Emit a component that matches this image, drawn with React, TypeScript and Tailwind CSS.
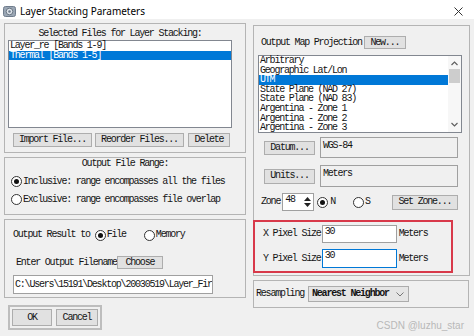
import React from "react";

const T = "font-['Liberation_Mono',monospace] text-[10px] leading-[10px] tracking-[-1.2px] text-[#141414] whitespace-pre";

function Btn({ children, className = "" }: { children: React.ReactNode; className?: string }) {
  return (
    <div className={`flex items-center justify-center bg-[#e1e1e1] border border-[#adadad] shrink-0 ${className}`}>
      {children}
    </div>
  );
}

function Radio({ checked }: { checked?: boolean }) {
  return (
    <div className="w-[11px] h-[11px] rounded-full border border-[#333] bg-white flex items-center justify-center shrink-0">
      {checked && <div className="w-[5px] h-[5px] rounded-full bg-[#111]" />}
    </div>
  );
}

const frame = "border border-[#b4b4b4]";

export default function App() {
  const projections = [
    "Arbitrary",
    "Geographic Lat/Lon",
    "UTM",
    "State Plane (NAD 27)",
    "State Plane (NAD 83)",
    "Argentina - Zone 1",
    "Argentina - Zone 2",
    "Argentina - Zone 3",
  ];
  return (
    <div className={`relative w-[474px] h-[336px] overflow-hidden bg-[#f0f0f0] ${T}`}>
      {/* Title bar */}
      <div className="h-[19px] bg-white flex items-center">
        <svg width="13" height="11" viewBox="0 0 13 11" className="ml-[3px] mt-[3px]">
          <rect x="0.5" y="0.5" width="12" height="10" rx="2" fill="#9aa6b4" stroke="#6f7c8c" />
          <circle cx="6.5" cy="5.5" r="3.3" fill="#dde3ea" stroke="#566270" strokeWidth="0.8" />
          <circle cx="6.5" cy="5.5" r="1.3" fill="#6f7c8c" />
        </svg>
        <span className="ml-[4px] mt-[2px] font-['Noto_Sans',sans-serif] text-[10px] tracking-normal text-black">
          Layer Stacking Parameters
        </span>
        <svg width="9" height="9" viewBox="0 0 9 9" className="ml-auto mr-[11px] mt-[3px]">
          <path d="M0.5 0.5 L8.5 8.5 M8.5 0.5 L0.5 8.5" stroke="#333" strokeWidth="1" />
        </svg>
      </div>

      <div className="flex">
        {/* Left column */}
        <div className="ml-[4px] mt-[4px] flex flex-col w-[242px]">
          {/* Panel 1 */}
          <div className={`h-[130px] ${frame} flex flex-col`}>
            <div className="ml-[3px] mt-[5px] w-[224px] text-center">Selected Files for Layer Stacking:</div>
            <div className="ml-[3px] mt-[1px] w-[224px] h-[88px] bg-white border border-[#828790] flex flex-col">
              <div className="h-[9.6px] leading-[9.6px] pl-[1px]">Layer_re [Bands 1-9]</div>
              <div className="h-[9.6px] leading-[9.6px] pl-[1px] bg-[#0078d7] text-white">Thermal [Bands 1-5]</div>
            </div>
            <div className="flex mt-[5px] ml-[8px]">
              <Btn className="w-[79px] h-[14px]">Import File...</Btn>
              <Btn className="w-[89px] h-[14px] ml-[3px]">Reorder Files...</Btn>
              <Btn className="w-[42px] h-[14px] ml-[4px]">Delete</Btn>
            </div>
          </div>

          {/* Panel 2 */}
          <div className={`mt-[4px] h-[58px] ${frame} flex flex-col`}>
            <div className="mt-[1px] text-center">Output File Range:</div>
            <div className="mt-[7px] ml-[6px] flex items-center h-[11px]">
              <Radio checked />
              <span className="ml-[1px]">Inclusive: range encompasses all the files</span>
            </div>
            <div className="mt-[7px] ml-[6px] flex items-center h-[11px]">
              <Radio />
              <span className="ml-[1px]">Exclusive: range encompasses file overlap</span>
            </div>
          </div>

          {/* Panel 3 */}
          <div className={`mt-[4px] h-[79px] ${frame} flex flex-col`}>
            <div className="mt-[9px] ml-[8px] flex items-center h-[12px]">
              <span>Output Result to </span>
              <Radio checked />
              <span className="ml-[1px]">File</span>
              <div className="ml-[18px]">
                <Radio />
              </div>
              <span className="ml-[1px]">Memory</span>
            </div>
            <div className="mt-[15px] ml-[11px] flex items-center h-[13px]">
              <span>Enter Output Filename</span>
              <Btn className="w-[46px] h-[13px] ml-[0px]">Choose</Btn>
            </div>
            <div className="mt-[6px] ml-[8px] w-[200px] h-[19px] bg-white border border-[#a0a0a0] flex items-center pl-[1px] overflow-hidden">
              <span>C:\Users\15191\Desktop\20030519\Layer_Fir</span>
            </div>
          </div>

          {/* OK / Cancel */}
          <div className="mt-[7px] ml-[4px] self-start border-2 border-[#bdbdbd] p-[2px] flex">
            <Btn className="w-[40px] h-[17px]">OK</Btn>
            <Btn className="w-[42px] h-[17px] ml-[4px]">Cancel</Btn>
          </div>
        </div>

        {/* Right column */}
        <div className="ml-[7px] mt-[6px] flex flex-col">
          <div className={`w-[217px] h-[251px] ${frame} flex flex-col`}>
            <div className="mt-[10px] ml-[7px] flex items-center h-[13px]">
              <span>Output Map Projection</span>
              <Btn className="w-[42px] h-[13px] ml-[2px]">New...</Btn>
            </div>
            <div className="mt-[6px] ml-[4px] w-[204px] h-[78px] bg-white border border-[#828790] flex">
              <div className="flex-1 flex flex-col">
                {projections.map((p) => (
                  <div
                    key={p}
                    className={`h-[9.6px] leading-[9.6px] pl-[1px] ${p === "UTM" ? "bg-[#0078d7] text-white" : ""}`}
                  >
                    {p}
                  </div>
                ))}
              </div>
              <div className="w-[13px] bg-[#f7f7f7] flex flex-col items-center">
                <svg width="7" height="5" viewBox="0 0 7 5" className="mt-[5px]">
                  <path d="M0.5 4 L3.5 1 L6.5 4" stroke="#606060" strokeWidth="1.2" fill="none" />
                </svg>
                <div className="mt-[3px] w-[11px] h-[14px] bg-[#cdcdcd]" />
                <svg width="7" height="5" viewBox="0 0 7 5" className="mt-auto mb-[5px]">
                  <path d="M0.5 1 L3.5 4 L6.5 1" stroke="#606060" strokeWidth="1.2" fill="none" />
                </svg>
              </div>
            </div>

            <div className="mt-[4px] flex items-center">
              <Btn className="ml-[10px] w-[51px] h-[14px]">Datum...</Btn>
              <div className="ml-[5px] w-[138px] h-[21px] bg-[#f0f0f0] border border-[#a0a0a0] pl-[2px] pt-[3px]">WGS-84</div>
            </div>
            <div className="mt-[7px] flex items-center">
              <Btn className="ml-[10px] w-[51px] h-[15px]">Units...</Btn>
              <div className="ml-[5px] w-[138px] h-[22px] bg-[#f0f0f0] border border-[#a0a0a0] pl-[2px] pt-[3px]">Meters</div>
            </div>
            <div className="mt-[6px] flex items-center h-[18px]">
              <span className="ml-[7px]">Zone</span>
              <div className="ml-[2px] w-[32px] h-[18px] bg-white border border-[#a0a0a0] flex">
                <span className="pl-[2px] pt-[1px] flex-1">48</span>
                <svg width="7" height="10" viewBox="0 0 7 10" className="mt-[3px] mr-[2px]">
                  <path d="M0 4 L3.5 0 L7 4 Z M0 6 L3.5 10 L7 6 Z" fill="#222" />
                </svg>
              </div>
              <div className="ml-[3px]">
                <Radio checked />
              </div>
              <span className="ml-[2px]">N</span>
              <div className="ml-[18px]">
                <Radio />
              </div>
              <span className="ml-[1px]">S</span>
              <Btn className="ml-[22px] w-[66px] h-[15px]">Set Zone...</Btn>
            </div>

            <div className="mt-[9px] -ml-[1px] w-[200px] h-[53px] border-2 border-[#d8394a] flex flex-col">
              <div className="mt-[3px] flex items-center h-[18px]">
                <span className="ml-[8px]">X Pixel Size</span>
                <div className="ml-[1px] w-[75px] h-[18px] bg-white border border-[#a0a0a0] pl-[2px] pt-[1px]">30</div>
                <span className="ml-[2px]">Meters</span>
              </div>
              <div className="mt-[6px] flex items-center h-[19px]">
                <span className="ml-[8px]">Y Pixel Size</span>
                <div className="ml-[1px] w-[75px] h-[19px] bg-white border border-[#0078d7] pl-[2px] pt-[1px]">30</div>
                <span className="ml-[2px]">Meters</span>
              </div>
            </div>
          </div>

          <div className={`mt-[4px] w-[216px] h-[28px] ${frame} flex items-center`}>
            <span className="ml-[2px]">Resampling</span>
            <div className="ml-[4px] w-[101px] h-[16px] bg-[#e5e5e5] border border-[#acacac] flex items-center">
              <span className="ml-[3px] font-bold">Nearest Neighbor</span>
              <svg width="8" height="5" viewBox="0 0 8 5" className="ml-auto mr-[4px]">
                <path d="M0.5 0.5 L4 4 L7.5 0.5" stroke="#777" strokeWidth="1" fill="none" />
              </svg>
            </div>
          </div>
        </div>
      </div>

      <div className="absolute right-[10px] top-[320px] font-['Liberation_Sans',sans-serif] text-[10px] leading-[12px] tracking-normal text-[#b8b8b8]">
        CSDN @luzhu_star
      </div>
    </div>
  );
}
